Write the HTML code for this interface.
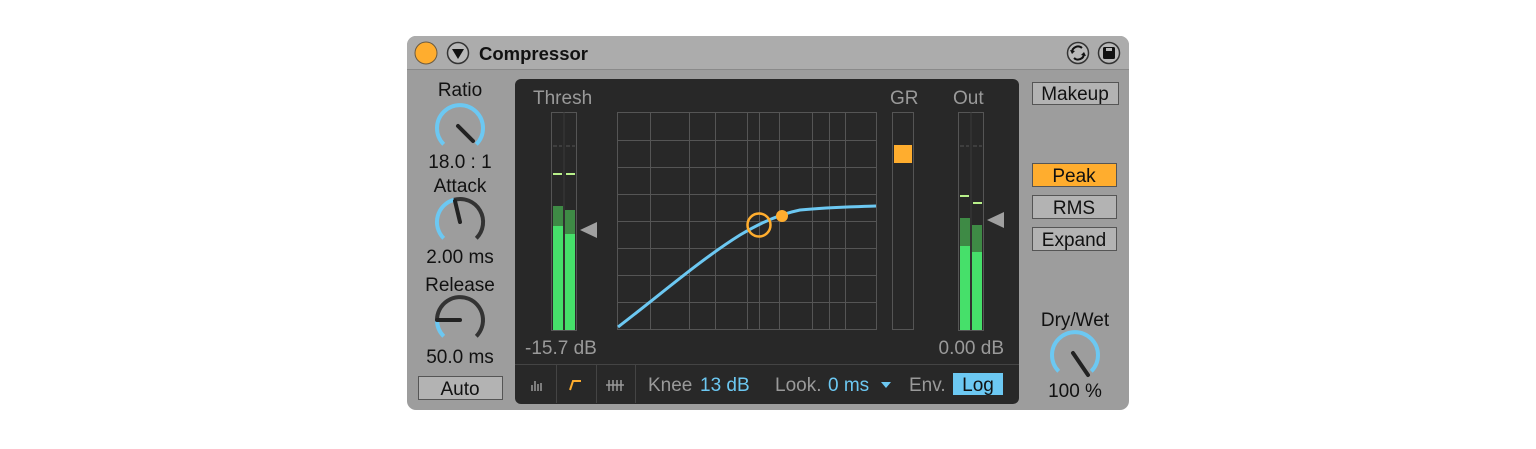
<!DOCTYPE html>
<html><head><meta charset="utf-8"><style>
html,body{margin:0;padding:0;background:#fff;width:1536px;height:449px;overflow:hidden}
svg{display:block}
text{font-family:"Liberation Sans",sans-serif}
</style></head><body>
<svg width="1536" height="449" viewBox="0 0 1536 449">
<rect x="407" y="36" width="722" height="374" rx="9" fill="#9d9d9d"/>
<path d="M407 69 V45 a9 9 0 0 1 9 -9 H1120 a9 9 0 0 1 9 9 V69 Z" fill="#acacac"/>
<line x1="407" y1="69.5" x2="1129" y2="69.5" stroke="#8a8a8a"/>
<circle cx="426" cy="53" r="11" fill="#ffad2e" stroke="#6a5a40" stroke-width="1"/>
<circle cx="458" cy="53" r="10.5" fill="#b8b8b8" stroke="#333" stroke-width="1.5"/>
<path d="M452 49 H464 L458 59 Z" fill="#111"/>
<text x="479" y="60" font-size="18.5" font-weight="bold" fill="#111">Compressor</text>
<circle cx="1078" cy="53" r="10.5" fill="#b8b8b8" stroke="#333" stroke-width="1.5"/>
<path d="M1072 52 a6 6 0 0 1 10 -4 M1084 54 a6 6 0 0 1 -10 4" fill="none" stroke="#111" stroke-width="2"/>
<path d="M1070 50 l2 4 l3 -3 Z M1086 56 l-2 -4 l-3 3 Z" fill="#111"/>
<circle cx="1109" cy="53" r="10.5" fill="#b8b8b8" stroke="#333" stroke-width="1.5"/>
<rect x="1103" y="47" width="12" height="12" rx="1.5" fill="#111"/>
<rect x="1106" y="48" width="6" height="3" fill="#b8b8b8"/>

<g fill="#111" font-size="19" text-anchor="middle">
<text x="460" y="96">Ratio</text>
<text x="460" y="168">18.0 : 1</text>
<text x="460" y="192">Attack</text>
<text x="460" y="263">2.00 ms</text>
<text x="460" y="291">Release</text>
<text x="460" y="363">50.0 ms</text>
<text x="1075" y="326">Dry/Wet</text>
<text x="1075" y="397">100 %</text>
</g>
<g fill="none" stroke-width="4">
<path d="M443.7 144.3 A23 23 0 1 1 476.3 144.3" stroke="#6cc8f2"/>
<path d="M443.7 238.3 A23 23 0 0 1 454 199.8" stroke="#6cc8f2"/>
<path d="M454 199.8 A23 23 0 0 1 476.3 238.3" stroke="#333"/>
<path d="M443.7 336.3 A23 23 0 0 1 437 320" stroke="#6cc8f2"/>
<path d="M437 320 A23 23 0 1 1 476.3 336.3" stroke="#333"/>
<path d="M1058.7 371.3 A23 23 0 1 1 1091.3 371.3" stroke="#6cc8f2"/>
</g>
<g stroke="#222" stroke-width="4" stroke-linecap="round">
<line x1="458" y1="126" x2="473" y2="141"/>
<line x1="460" y1="222" x2="455" y2="201"/>
<line x1="460" y1="320" x2="437" y2="320"/>
<line x1="1073" y1="353" x2="1088" y2="375"/>
</g>
<rect x="418.5" y="376.5" width="84" height="23" fill="#b3b3b3" stroke="#555"/>
<text x="460" y="395" font-size="19" fill="#111" text-anchor="middle">Auto</text>

<rect x="1032.5" y="82.5" width="86" height="22" fill="#b3b3b3" stroke="#555"/>
<text x="1075" y="100" font-size="19" fill="#111" text-anchor="middle">Makeup</text>
<rect x="1032.5" y="163.5" width="84" height="23" fill="#ffad2e" stroke="#555"/>
<text x="1074" y="182" font-size="19" fill="#111" text-anchor="middle">Peak</text>
<rect x="1032.5" y="195.5" width="84" height="23" fill="#b3b3b3" stroke="#555"/>
<text x="1074" y="214" font-size="19" fill="#111" text-anchor="middle">RMS</text>
<rect x="1032.5" y="227.5" width="84" height="23" fill="#b3b3b3" stroke="#555"/>
<text x="1074" y="246" font-size="19" fill="#111" text-anchor="middle">Expand</text>

<rect x="515" y="79" width="504" height="325" rx="6" fill="#282828"/>
<g fill="#9a9a9a" font-size="19">
<text x="533" y="104">Thresh</text>
<text x="890" y="104">GR</text>
<text x="953" y="104">Out</text>
<text x="525" y="354">-15.7 dB</text>
<text x="1004" y="354" text-anchor="end">0.00 dB</text>
</g>
<rect x="551.5" y="112.5" width="25" height="218" fill="none" stroke="#555"/>
<line x1="564" y1="112" x2="564" y2="330" stroke="#3a3a3a"/>
<path d="M553 146 h9 M566 146 h9" stroke="#555" stroke-dasharray="4 2"/>
<path d="M553 174 h9 M566 174 h9" stroke="#b8f08a" stroke-width="2"/>
<rect x="553" y="206" width="10" height="124" fill="#3e8a45"/>
<rect x="553" y="226" width="10" height="104" fill="#46e06a"/>
<rect x="565" y="210" width="10" height="120" fill="#3e8a45"/>
<rect x="565" y="234" width="10" height="96" fill="#46e06a"/>
<path d="M580 230 L597 222 V238 Z" fill="#a0a0a0"/>
<g stroke="#555" stroke-width="1" fill="none">
<rect x="617.5" y="112.5" width="259" height="217"/>
<path d="M617 140.5H877M617 167.5H877M617 194.5H877M617 221.5H877M617 248.5H877M617 275.5H877M617 302.5H877"/>
<path d="M650.5 112V330M689.5 112V330M715.5 112V330M747.5 112V330M759.5 112V330M779.5 112V330M812.5 112V330M829.5 112V330M845.5 112V330"/>
</g>
<path d="M618 327 C660 295,700 260,740 235 C760 223,780 214,800 210 C830 207,850 207,876 206" fill="none" stroke="#6cc8f2" stroke-width="3"/>
<circle cx="759" cy="225" r="11.5" fill="none" stroke="#ffad2e" stroke-width="2.5"/>
<circle cx="782" cy="216" r="6" fill="#ffad2e"/>
<rect x="892.5" y="112.5" width="21" height="217" fill="none" stroke="#555"/>
<rect x="894" y="145" width="18" height="18" fill="#ffad2e"/>
<rect x="958.5" y="112.5" width="25" height="218" fill="none" stroke="#555"/>
<line x1="971" y1="112" x2="971" y2="330" stroke="#3a3a3a"/>
<path d="M960 146 h9 M973 146 h9" stroke="#555" stroke-dasharray="4 2"/>
<path d="M960 196 h9 M973 203 h9" stroke="#b8f08a" stroke-width="2"/>
<rect x="960" y="218" width="10" height="112" fill="#3e8a45"/>
<rect x="960" y="246" width="10" height="84" fill="#46e06a"/>
<rect x="972" y="225" width="10" height="105" fill="#3e8a45"/>
<rect x="972" y="252" width="10" height="78" fill="#46e06a"/>
<path d="M987 220 L1004 212 V228 Z" fill="#a0a0a0"/>
<line x1="515" y1="364.5" x2="1019" y2="364.5" stroke="#444"/>
<path d="M556.5 365V403M596.5 365V403M635.5 365V403" stroke="#444"/>
<path d="M532 391V385M535 391V381M538 391V384M541 391V383" stroke="#999" stroke-width="1.5"/>
<path d="M570 390 L573 381 H581" fill="none" stroke="#ffad2e" stroke-width="2"/>
<path d="M606 385H624M609 380V391M613 380V391M617 380V391M621 380V391" stroke="#999" stroke-width="1.5"/>
<g font-size="19">
<text x="648" y="391" fill="#9a9a9a">Knee</text>
<text x="700" y="391" fill="#6cc8f2">13 dB</text>
<text x="775" y="391" fill="#9a9a9a">Look.</text>
<text x="828" y="391" fill="#6cc8f2">0 ms</text>
<text x="909" y="391" fill="#9a9a9a">Env.</text>
</g>
<path d="M881 382 H891 L886 388 Z" fill="#6cc8f2"/>
<rect x="953" y="373" width="50" height="22" fill="#6cc8f2"/>
<text x="978" y="391" font-size="19" fill="#111" text-anchor="middle">Log</text>
</svg>
</body></html>
